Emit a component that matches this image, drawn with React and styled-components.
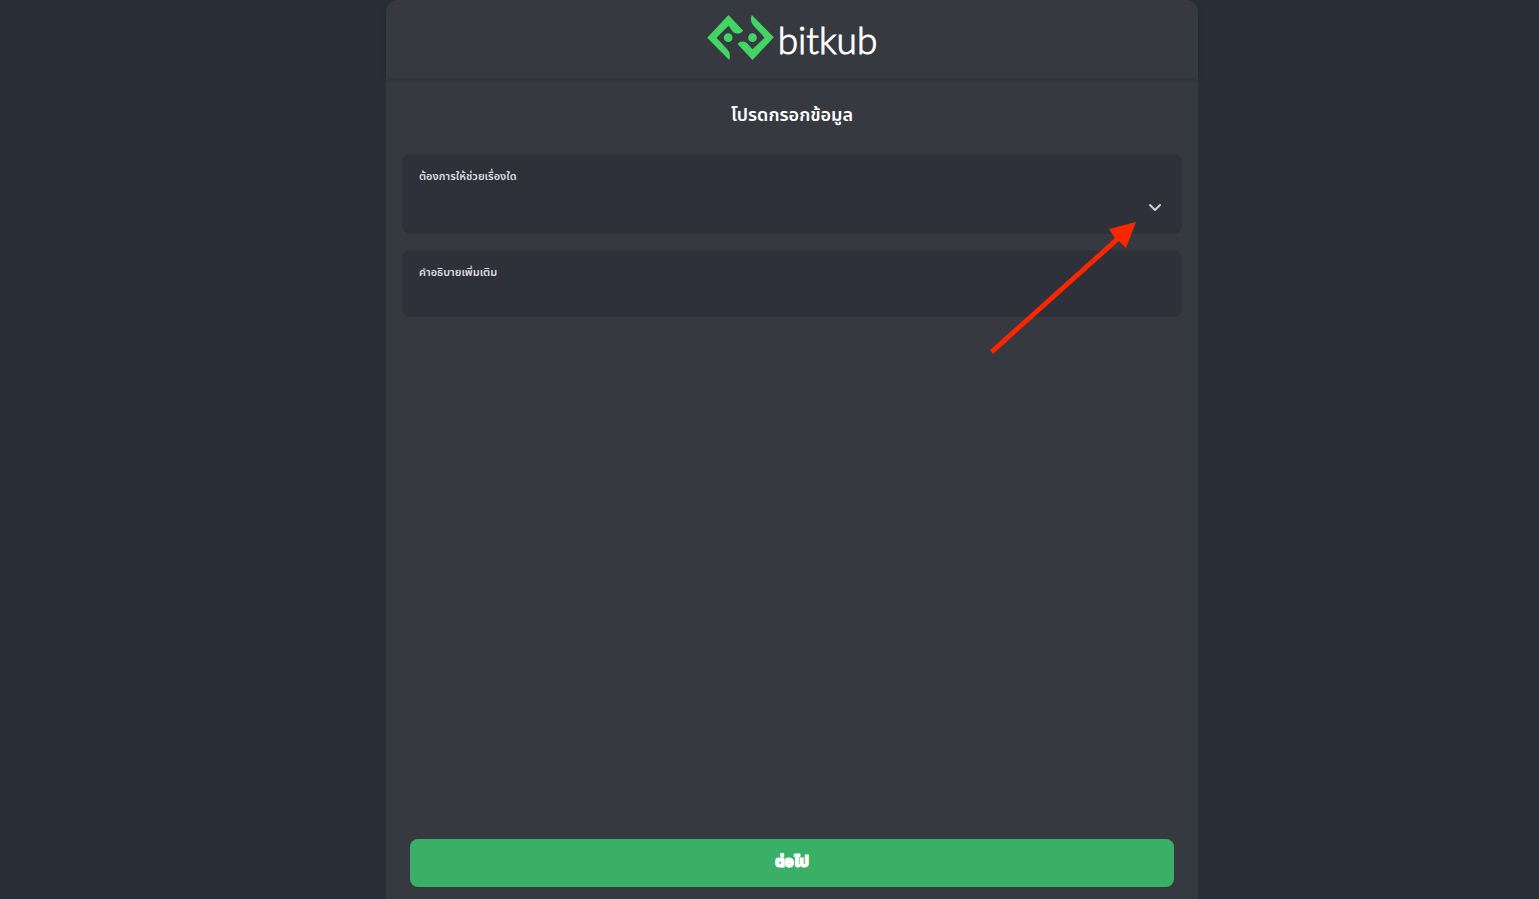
import React, {useState} from "react";
import styled, {createGlobalStyle} from "styled-components";

const GlobalStyle = createGlobalStyle`
    * {
        box-sizing: border-box;
    }
    body {
        margin: 0;
        background-color: #272e35;
        color: #ffffff;
        font-family: "Noto Sans Thai", "Noto Sans", sans-serif;
    }
    button,
    select,
    input {
        font-family: inherit;
    }
`;

const Page = styled.div`
    display: flex;
    justify-content: center;
    min-height: 100vh;
    padding-left: 45px;
    position: relative;
`;

const Panel = styled.main`
    display: flex;
    flex-direction: column;
    width: 100%;
    max-width: 812px;
    background-color: #373941;
    border-radius: 12px 12px 0 0;
`;

const Header = styled.header`
    display: flex;
    justify-content: center;
    align-items: center;
    gap: 4px;
    height: 78px;
    padding-bottom: 3px;
    box-shadow: 0 2px 4px rgba(0, 0, 0, 0.15);
`;

const LogoMark = styled.svg`
    width: 67px;
    height: 45px;
    fill: #42d564;
`;

const LogoText = styled.span`
    padding-top: 4px;
    font-family: Lato, sans-serif;
    font-size: 37px;
    font-weight: 300;
    line-height: 48px;
    -webkit-text-stroke: 1px #ffffff;
`;

const Form = styled.form`
    display: flex;
    flex: 1;
    flex-direction: column;
    padding: 20px 16px 12px;
`;

const Title = styled.h1`
    margin: 0;
    padding: 2px 0 22px;
    font-size: 18px;
    font-weight: 600;
    line-height: 32px;
    text-align: center;
`;

const Field = styled.div`
    display: flex;
    flex-direction: column;
    height: ${props => props.$tall ? "80px" : "67px"};
    margin-bottom: 16px;
    padding: 15px 17px 3px;
    background-color: #2e3139;
    border-radius: 8px;
`;

const Label = styled.label`
    color: #dcdde0;
    font-size: 11px;
    font-weight: 600;
    line-height: 16px;
`;

const SelectRow = styled.div`
    display: flex;
    flex: 1;
    align-items: center;
`;

const Select = styled.select`
    flex: 1;
    height: 32px;
    border: 0;
    outline: 0;
    appearance: none;
    background: transparent;
    color: #ffffff;
    font-size: 14px;
`;

const Chevron = styled.svg`
    width: 20px;
    height: 20px;
    fill: none;
    stroke: #d0d1d3;
    stroke-width: 2;
    stroke-linecap: round;
    stroke-linejoin: round;
    pointer-events: none;
`;

const Input = styled.input`
    flex: 1;
    min-height: 0;
    padding: 0;
    border: 0;
    outline: 0;
    background: transparent;
    color: #ffffff;
    font-size: 14px;
`;

const Submit = styled.button`
    height: 48px;
    margin: auto 8px 0;
    padding: 0 0 2px;
    border: 0;
    border-radius: 8px;
    background-color: #3aaf66;
    color: #ffffff;
    font-size: 15px;
    font-weight: 900;
    -webkit-text-stroke: 1px #ffffff;
    cursor: pointer;
`;

const Pointer = styled.svg`
    position: absolute;
    top: 220px;
    left: 988px;
    width: 150px;
    height: 136px;
    fill: #fa2600;
    pointer-events: none;
`;

const Logo = () => (
    <>
        <LogoMark viewBox="24 30 200 135" aria-hidden="true">
            <path d="M88 30 L132 77 Q121 92 102 82 L88 62 L52 98 L84 133 Q97 147 90 165 L24 98 Z" />
            <path d="M160 165 L115 117 Q127 104 143 114 L160 133 L196 98 L164 63 Q150 48 158 30 L224 97 Z" />
            <circle cx="87" cy="98" r="13" />
            <circle cx="160" cy="98" r="13" />
        </LogoMark>
        <LogoText>bitkub</LogoText>
    </>
);

const App = () => {
    const [topic, setTopic] = useState("");
    const [detail, setDetail] = useState("");

    return (
        <>
            <GlobalStyle />
            <Page>
                <Panel>
                    <Header>
                        <Logo />
                    </Header>
                    <Form onSubmit={e => e.preventDefault()}>
                        <Title>โปรดกรอกข้อมูล</Title>
                        <Field $tall>
                            <Label htmlFor="topic">ต้องการให้ช่วยเรื่องใด</Label>
                            <SelectRow>
                                <Select id="topic" value={topic} onChange={e => setTopic(e.target.value)}>
                                    <option value=""></option>
                                </Select>
                                <Chevron viewBox="0 0 20 20" aria-hidden="true">
                                    <path d="M5 7 L10 12 L15 7" />
                                </Chevron>
                            </SelectRow>
                        </Field>
                        <Field>
                            <Label htmlFor="detail">คำอธิบายเพิ่มเติม</Label>
                            <Input id="detail" value={detail} onChange={e => setDetail(e.target.value)} />
                        </Field>
                        <Submit type="submit">ต่อไป</Submit>
                    </Form>
                </Panel>
                <Pointer viewBox="0 0 150 136" aria-hidden="true">
                    <path d="M2 130 L127 18 L121 9 L148 2 L138 28 L131 21 L5 134 Z" />
                </Pointer>
            </Page>
        </>
    );
};

export default App;
